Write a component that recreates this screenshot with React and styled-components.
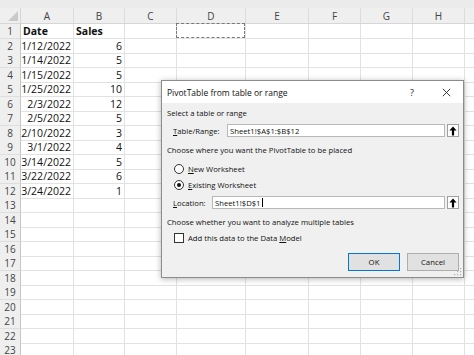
import React from 'react'
import styled, { createGlobalStyle } from 'styled-components';

const GlobalStyle = createGlobalStyle`
  html, body {
    margin: 0;
    padding: 0;
    overflow: hidden;
    background: #ffffff;
  }
  body {
    font-family: "Open Sans", "Noto Sans", sans-serif;
  }
`

const COLS = [
  { key: 'A', width: 53 },
  { key: 'B', width: 51 },
  { key: 'C', width: 52 },
  { key: 'D', width: 69 },
  { key: 'E', width: 63 },
  { key: 'F', width: 52 },
  { key: 'G', width: 52 },
  { key: 'H', width: 52 },
  { key: '', width: 52 },
];

const TEMPLATE = `21px ${COLS.map(c => c.width + 'px').join(' ')}`;

const DATA = [
  ['Date', 'Sales'],
  ['1/12/2022', 6],
  ['1/14/2022', 5],
  ['1/15/2022', 5],
  ['1/25/2022', 10],
  ['2/3/2022', 12],
  ['2/5/2022', 5],
  ['2/10/2022', 3],
  ['3/1/2022', 4],
  ['3/14/2022', 5],
  ['3/22/2022', 6],
  ['3/24/2022', 1],
];

const ROW_COUNT = 23;

const UpArrow = () => (
  <svg width="8" height="10" viewBox="0 0 8 10">
    <path d="M4 0.5 L7.6 4.6 L5.1 4.6 L5.1 9.6 L2.9 9.6 L2.9 4.6 L0.4 4.6 Z" fill="#000" />
  </svg>
);

const CloseIcon = () => (
  <svg width="9" height="9" viewBox="0 0 9 9">
    <path d="M0.8 0.8 L8.2 8.2 M8.2 0.8 L0.8 8.2" stroke="#222" strokeWidth="0.9" fill="none" />
  </svg>
);

const App = () => {
  const rows = [];
  for (let r = 1; r <= ROW_COUNT; r++) {
    const data = DATA[r - 1] || [];
    rows.push(
      <Row key={r}>
        <RowHead>{r}</RowHead>
        {COLS.map((c, i) => {
          const v = data[i];
          const isHeader = r === 1;
          const numeric = !isHeader && v !== undefined;
          return (
            <Cell
              key={i}
              $bold={isHeader}
              $right={numeric}
              $selected={r === 1 && c.key === 'D'}
            >
              {v}
            </Cell>
          );
        })}
      </Row>
    );
  }

  return (
    <>
      <GlobalStyle />
      <Page>
        <TopBand />
        <HeaderRow>
          <Corner><Triangle /></Corner>
          {COLS.map((c, i) => <ColHead key={i}>{c.key}</ColHead>)}
        </HeaderRow>
        {rows}

        <Dialog>
          <TitleBar>
            <Title>PivotTable from table or range</Title>
            <TitleButtons>
              <Help>?</Help>
              <CloseIcon />
            </TitleButtons>
          </TitleBar>
          <Body>
            <Section $mt={3}>Select a table or range</Section>
            <FieldRow $mt={4}>
              <FieldLabel $width={54}><u>T</u>able/Range:</FieldLabel>
              <Input>Sheet1!$A$1:$B$12</Input>
              <ArrowButton><UpArrow /></ArrowButton>
            </FieldRow>

            <Section $mt={6}>Choose where you want the PivotTable to be placed</Section>
            <Option $mt={5}>
              <Radio />
              <span><u>N</u>ew Worksheet</span>
            </Option>
            <Option $mt={2}>
              <Radio $checked />
              <span><u>E</u>xisting Worksheet</span>
            </Option>
            <FieldRow $mt={4}>
              <FieldLabel $width={39}><u>L</u>ocation:</FieldLabel>
              <Input>Sheet1!$D$1<Caret /></Input>
              <ArrowButton><UpArrow /></ArrowButton>
            </FieldRow>

            <Section $mt={6}>Choose whether you want to analyze multiple tables</Section>
            <Option $mt={2}>
              <Check />
              <span>Add this data to the Data <u>M</u>odel</span>
            </Option>

            <Buttons>
              <Button $primary>OK</Button>
              <Button>Cancel</Button>
            </Buttons>
          </Body>
          <Grip>
            <svg width="8" height="8" viewBox="0 0 8 8">
              <g fill="#b0b0b0">
                <rect x="6" y="0" width="1.2" height="1.2" />
                <rect x="3" y="3" width="1.2" height="1.2" />
                <rect x="6" y="3" width="1.2" height="1.2" />
                <rect x="0" y="6" width="1.2" height="1.2" />
                <rect x="3" y="6" width="1.2" height="1.2" />
                <rect x="6" y="6" width="1.2" height="1.2" />
              </g>
            </svg>
          </Grip>
        </Dialog>
      </Page>
    </>
  )
}

export default App;

const Page = styled.div`
  position: relative;
  width: 474px;
  height: 355px;
  overflow: hidden;
  background: #fff;
`
const TopBand = styled.div`
  height: 8px;
  background: #ebebeb;
`
const HeaderRow = styled.div`
  display: grid;
  grid-template-columns: ${TEMPLATE};
  height: 16px;
  background: #efefef;
  border-bottom: 1px solid #d6d6d6;
  box-sizing: border-box;
`
const Corner = styled.div`
  position: relative;
  border-right: 1px solid #d6d6d6;
`
const Triangle = styled.div`
  position: absolute;
  right: 2px;
  bottom: 2px;
  width: 10px;
  height: 10px;
  background: #c9c9c9;
  clip-path: polygon(100% 0, 100% 100%, 0 100%);
`
const ColHead = styled.div`
  display: flex;
  align-items: center;
  justify-content: center;
  font-size: 10px;
  color: #444;
  border-right: 1px solid #dcdcdc;
`
const Row = styled.div`
  display: grid;
  grid-template-columns: ${TEMPLATE};
  height: 14.5px;
`
const RowHead = styled.div`
  display: flex;
  align-items: center;
  justify-content: center;
  font-size: 10px;
  color: #444;
  background: #efefef;
  border-right: 1px solid #c6c6c6;
  border-bottom: 1px solid #dedede;
  box-sizing: border-box;
`
const Cell = styled.div`
  position: relative;
  display: flex;
  align-items: center;
  justify-content: ${p => (p.$right ? 'flex-end' : 'flex-start')};
  padding: 0 2px;
  font-size: 10.5px;
  font-weight: ${p => (p.$bold ? 700 : 400)};
  color: #111;
  border-right: 1px solid #e2e2e2;
  border-bottom: 1px solid #e2e2e2;
  box-sizing: border-box;
  white-space: nowrap;
  ${p => p.$selected && `
    &::after {
      content: '';
      position: absolute;
      inset: -1px 0 0 -1px;
      border: 1px dashed #7a7a7a;
    }
  `}
`

const Dialog = styled.div`
  position: absolute;
  left: 161px;
  top: 80px;
  width: 303px;
  height: 198px;
  box-sizing: border-box;
  background: #f0f0f0;
  border: 1px solid #8c8c8c;
  box-shadow: 0 1px 6px rgba(0, 0, 0, 0.3);
  display: flex;
  flex-direction: column;
  font-size: 7.7px;
  color: #111;
`
const TitleBar = styled.div`
  display: flex;
  align-items: center;
  justify-content: space-between;
  height: 22px;
  background: #fff;
  padding: 0 12px 0 5px;
`
const Title = styled.div`
  font-size: 8.5px;
  color: #111;
`
const TitleButtons = styled.div`
  display: flex;
  align-items: center;
  gap: 28px;
`
const Help = styled.span`
  font-size: 9px;
  color: #222;
`
const Body = styled.div`
  display: flex;
  flex-direction: column;
  padding: 0 4px 0 5px;
  flex: 1;
`
const Section = styled.div`
  height: 14px;
  line-height: 14px;
  margin-top: ${p => p.$mt}px;
  white-space: nowrap;
`
const FieldRow = styled.div`
  display: flex;
  align-items: center;
  height: 13px;
  margin-top: ${p => p.$mt}px;
  padding-left: 6px;
`
const FieldLabel = styled.div`
  width: ${p => p.$width}px;
  white-space: nowrap;
`
const Input = styled.div`
  flex: 1;
  height: 13px;
  box-sizing: border-box;
  display: flex;
  align-items: center;
  padding-left: 2px;
  background: #fff;
  border: 1px solid #b8b8b8;
  white-space: nowrap;
`
const Caret = styled.span`
  display: inline-block;
  width: 1px;
  height: 9px;
  margin-left: 1px;
  background: #000;
`
const ArrowButton = styled.div`
  width: 12px;
  height: 13px;
  margin-left: 2px;
  box-sizing: border-box;
  border: 1px solid #a0a0a0;
  background: #fdfdfd;
  display: flex;
  align-items: center;
  justify-content: center;
`
const Option = styled.div`
  display: flex;
  align-items: center;
  gap: 4px;
  height: 14px;
  margin-top: ${p => p.$mt}px;
  padding-left: 7px;
  white-space: nowrap;
`
const Radio = styled.span`
  position: relative;
  width: 10px;
  height: 10px;
  box-sizing: border-box;
  border: 1px solid #333;
  border-radius: 50%;
  background: #fff;
  ${p => p.$checked && `
    &::after {
      content: '';
      position: absolute;
      left: 2px;
      top: 2px;
      width: 4px;
      height: 4px;
      border-radius: 50%;
      background: #111;
    }
  `}
`
const Check = styled.span`
  width: 10px;
  height: 10px;
  box-sizing: border-box;
  border: 1px solid #333;
  background: #fff;
`
const Buttons = styled.div`
  display: flex;
  justify-content: flex-end;
  gap: 7px;
  margin-top: 8px;
`
const Button = styled.div`
  width: 52px;
  height: 18px;
  box-sizing: border-box;
  display: flex;
  align-items: center;
  justify-content: center;
  background: #e1e1e1;
  border: 1px solid ${p => (p.$primary ? '#0078d7' : '#adadad')};
  font-size: 7.8px;
  color: #111;
`
const Grip = styled.div`
  position: absolute;
  right: 1px;
  bottom: 1px;
  line-height: 0;
`
